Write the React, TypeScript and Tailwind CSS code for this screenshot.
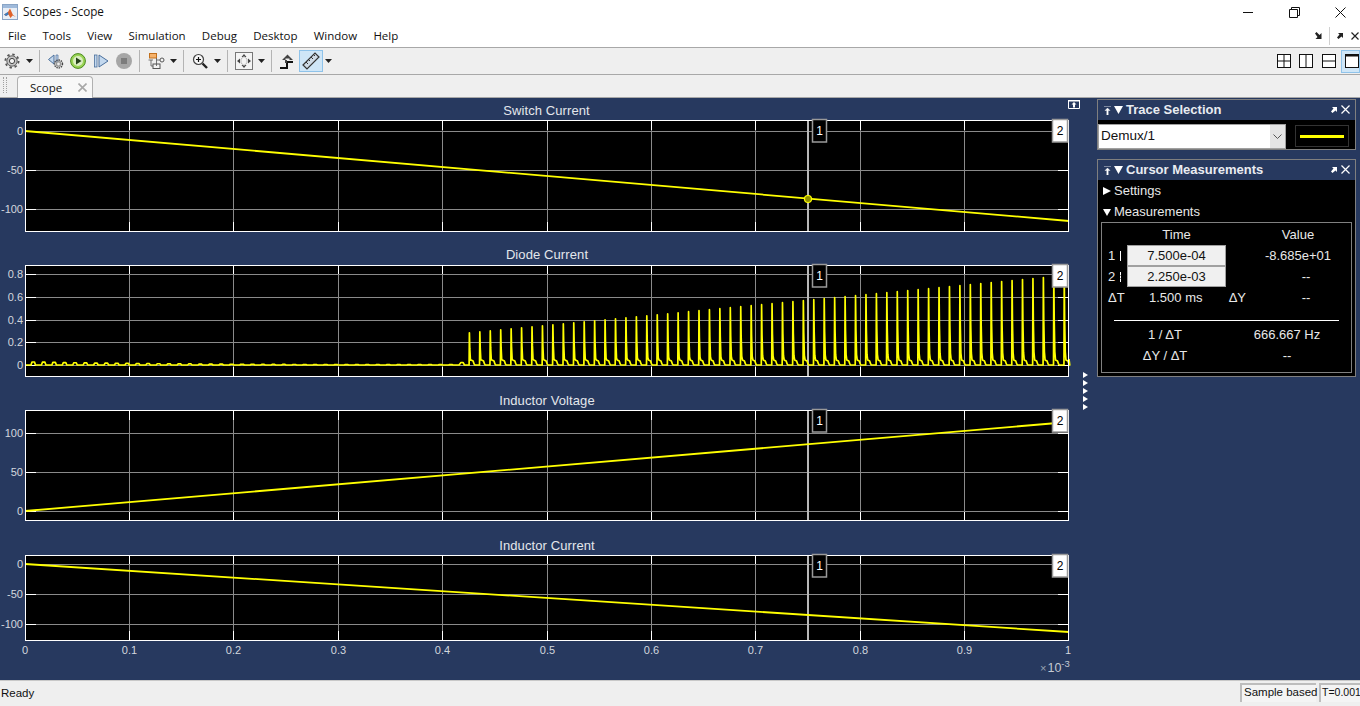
const XS = Array.from({ length: 11 }, (_, i) => Math.round(24.7 + i * 104.375) + 0.5);

function buildDiodePath(y0: number) {
  let d = `M25 ${y0}`;
  // small ripple that dies out on the left side
  for (let k = 0; k < 41; k++) {
    const x = 31 + k * 10.44;
    const a = Math.max(0.35, 3 * Math.exp(-k / 14));
    d += ` L${x} ${y0} L${x + 1} ${y0 - a} L${x + 3.5} ${y0 - a} L${x + 4.5} ${y0} `;
  }
  d += ` L459 ${y0} L461 ${y0 - 2.5} L463 ${y0 - 2.5} L464.5 ${y0}`;
  for (let k = 0; k < 58; k++) {
    const x = 469.7 + k * 10.436;
    if (x > 1068) break;
    const h = 115 * (0.28 + (0.48 * k) / 55);
    d += ` L${x - 0.6} ${y0} L${x - 0.3} ${y0 - h} L${x + 0.1} ${y0 - h * 0.5} L${x + 0.7} ${y0 - h * 0.15} L${x + 1.4} ${y0 - 5}`;
    d += ` L${x + 3.4} ${y0 - 4} L${x + 4.4} ${y0 - 1} L${x + 5.2} ${y0}`;
  }
  return d + ` L1069 ${y0 - 6}`;
}

interface PlotProps {
  title: string;
  height: number;
  ticks: { y: number; label: string }[];
  trace: string;
  traceWidth?: number;
  dot?: [number, number];
  xAxis?: boolean;
  popout?: boolean;
  tightTitle?: boolean;
}

function Plot({ title, height, ticks, trace, traceWidth = 1.8, dot, xAxis, popout, tightTitle }: PlotProps) {
  const extra = xAxis ? 36 : 0;
  return (
    <div className="flex flex-col">
      <div className="flex h-[20px] items-start pl-[25px]">
        <div className={`w-[1044px] text-center text-[13px] leading-[20px] tracking-[0.1px] text-[#e4e7ec] ${tightTitle ? "" : "pt-[1px]"}`}>{title}</div>
        {popout && (
          <svg width="12" height="9" viewBox="0 0 12 9" className="shrink-0">
            <path d="M0.5 0.5H11.5V8.5H0.5Z" fill="none" stroke="#fff" />
            <path d="M0 0H12V1.5H0Z" fill="#fff" />
            <path d="M6 2L8.5 4.6H7V7.5H5V4.6H3.5Z" fill="#fff" />
          </svg>
        )}
      </div>
      <svg width="1080" height={height + extra} viewBox={`0 0 1080 ${height + extra}`} className="block overflow-visible">
        <rect x="25" y="0" width="1044" height={height} fill="#000" />
        {XS.slice(1, 10).map((x) => (
          <g key={x}>
            <line x1={x} x2={x} y1="0" y2={height} stroke="#8a8a8a" />
            <line x1={x} x2={x} y1="0" y2="10" stroke="#fff" />
            <line x1={x} x2={x} y1={height - 10} y2={height} stroke="#fff" />
          </g>
        ))}
        {ticks.map((t) => (
          <g key={t.label}>
            <line x1="25" x2="1069" y1={t.y + 0.5} y2={t.y + 0.5} stroke="#8a8a8a" />
            <line x1="25" x2="36" y1={t.y + 0.5} y2={t.y + 0.5} stroke="#fff" />
            <line x1="1058" x2="1069" y1={t.y + 0.5} y2={t.y + 0.5} stroke="#fff" />
            <text x="23" y={t.y + 4} textAnchor="end" fontSize="11" fill="#d3d7de" fontFamily="'Liberation Sans', sans-serif">
              {t.label}
            </text>
          </g>
        ))}
        <rect x="807" y="0" width="2" height={height} fill="#b8b8b8" />
        <path d={trace} fill="none" stroke="#ffff00" strokeWidth={traceWidth} strokeLinejoin="round" />
        {dot && <circle cx={dot[0]} cy={dot[1]} r="3.5" fill="#8f8f00" stroke="#ffff00" strokeWidth="1.2" />}
        <rect x="25.5" y="0.5" width="1043" height={height - 1} fill="none" stroke="#fff" />
        <rect x="812.5" y="-0.5" width="14" height="22.5" fill="#000" stroke="#9a9a9a" strokeWidth="1.5" />
        <text x="819.5" y="15" textAnchor="middle" fontSize="12" fill="#fff" fontFamily="'Liberation Sans', sans-serif">1</text>
        <rect x="1052.5" y="-0.5" width="15" height="22.5" fill="#fff" stroke="#9a9a9a" strokeWidth="1.5" />
        <text x="1060" y="15" textAnchor="middle" fontSize="12" fill="#000" fontFamily="'Liberation Sans', sans-serif">2</text>
        {xAxis &&
          XS.map((x, i) => (
            <text key={i} x={i === 0 ? 25 : i === 10 ? 1068 : x} y={height + 13} textAnchor="middle" fontSize="11" fill="#d3d7de" fontFamily="'Liberation Sans', sans-serif">
              {i === 0 ? "0" : i === 10 ? "1" : (i / 10).toFixed(1)}
            </text>
          ))}
        {xAxis && (
          <text x="1040" y={height + 31} fontSize="12.5" fill="#c4c9d2" fontFamily="'Liberation Sans', sans-serif">
            <tspan fill="#9aa3b2" fontSize="11">×</tspan>
            <tspan dx="1">10</tspan>
            <tspan dy="-5" fontSize="9.5">-3</tspan>
          </text>
        )}
      </svg>
    </div>
  );
}

function Caret() {
  return (
    <svg width="7" height="4" viewBox="0 0 7 4" className="shrink-0">
      <path d="M0 0H7L3.5 4Z" fill="#222" />
    </svg>
  );
}

function Sep({ cls }: { cls: string }) {
  return <div className={`h-[22px] w-px shrink-0 bg-[#b4b4b4] ${cls}`} />;
}

function GearIcon({ size = 16 }: { size?: number }) {
  return (
    <svg width={size} height={size} viewBox="0 0 16 16" className="shrink-0">
      <circle cx="8" cy="8" r="6.6" fill="none" stroke="#555" strokeWidth="1.8" strokeDasharray="2.4 2.8" />
      <circle cx="8" cy="8" r="5.2" fill="#c4c4c4" stroke="#555" strokeWidth="0.9" />
      <circle cx="8" cy="8" r="2.6" fill="#f4f4f4" stroke="#444" strokeWidth="1" />
    </svg>
  );
}

function LayoutIcon({ kind }: { kind: "four" | "cols" | "rows" | "one" }) {
  return (
    <svg width="14" height="14" viewBox="0 0 14 14" className="shrink-0">
      <rect x="0.5" y="0.5" width="13" height="13" fill="#fff" stroke="#111" />
      {kind === "one" && <rect x="0.5" y="0.5" width="13" height="2" fill="#111" />}
      {(kind === "four" || kind === "cols") && <line x1="7" x2="7" y1="0" y2="14" stroke="#111" />}
      {(kind === "four" || kind === "rows") && <line y1="7" y2="7" x1="0" x2="14" stroke="#111" />}
    </svg>
  );
}

function Toolbar() {
  return (
    <div className="flex h-[26px] items-center bg-[#efefef] pl-[4px]">
      <GearIcon />
      <div className="ml-[6px]"><Caret /></div>
      <Sep cls="ml-[6px]" />
      {/* step back */}
      <svg width="16" height="16" viewBox="0 0 16 16" className="ml-[8px] shrink-0">
        <path d="M6 2L0.5 6.5L6 11V2Z" fill="#c3d8ee" stroke="#4a6f9c" />
        <path d="M8 2H10V9H8Z" fill="#c3d8ee" stroke="#4a6f9c" strokeWidth="0.7" />
        <circle cx="10.5" cy="11" r="4" fill="none" stroke="#444" strokeWidth="1.4" strokeDasharray="1.4 0.9" />
        <circle cx="10.5" cy="11" r="3" fill="#999" />
        <circle cx="10.5" cy="11" r="1.4" fill="#eee" />
      </svg>
      {/* run */}
      <svg width="16" height="16" viewBox="0 0 16 16" className="ml-[6px] shrink-0">
        <circle cx="8" cy="8" r="7.4" fill="#9ad455" stroke="#4a8a1e" />
        <circle cx="8" cy="8" r="5" fill="#dbeec2" />
        <path d="M6 4.5L11.5 8L6 11.5Z" fill="#23401a" />
      </svg>
      {/* step forward */}
      <svg width="16" height="16" viewBox="0 0 16 16" className="ml-[7px] shrink-0">
        <rect x="1.5" y="2" width="2.5" height="12" fill="#c3d8ee" stroke="#4a6f9c" strokeWidth="0.8" />
        <path d="M6 2L15 8L6 14Z" fill="#c3d8ee" stroke="#4a6f9c" />
      </svg>
      {/* stop */}
      <svg width="16" height="16" viewBox="0 0 16 16" className="ml-[7px] shrink-0">
        <circle cx="8" cy="8" r="8" fill="#a6a6a6" />
        <rect x="5" y="5" width="6" height="6" fill="#7c7c7c" />
      </svg>
      <Sep cls="ml-[7px]" />
      {/* library browser */}
      <svg width="18" height="18" viewBox="0 0 18 18" className="ml-[8px] shrink-0">
        <rect x="1.5" y="1.5" width="7" height="4.5" fill="#f6b26b" stroke="#c2701c" />
        <rect x="5" y="12" width="7" height="4.5" fill="#f4f4f4" stroke="#555" />
        <circle cx="14" cy="8" r="2" fill="#f4f4f4" stroke="#555" />
        <path d="M0.5 8H5M12 8H8.5V14M8.5 6V8M3 8V14H5" fill="none" stroke="#555" strokeWidth="0.8" />
      </svg>
      <div className="ml-[4px]"><Caret /></div>
      <Sep cls="ml-[6px]" />
      {/* zoom */}
      <svg width="16" height="16" viewBox="0 0 16 16" className="ml-[8px] shrink-0">
        <circle cx="6.5" cy="6.5" r="5" fill="#f7f7f7" stroke="#444" strokeWidth="1.2" />
        <path d="M4 6.5H9M6.5 4V9" stroke="#111" strokeWidth="1.2" />
        <path d="M10.5 10.5L15 15" stroke="#222" strokeWidth="2.4" />
      </svg>
      <div className="ml-[6px]"><Caret /></div>
      <Sep cls="ml-[6px]" />
      {/* fit to view */}
      <svg width="18" height="18" viewBox="0 0 18 18" className="ml-[7px] shrink-0">
        <rect x="0.5" y="0.5" width="17" height="17" fill="#f4f4f4" stroke="#777" />
        <path d="M9 2L11.5 5H6.5ZM9 16L6.5 13H11.5ZM2 9L5 6.5V11.5ZM16 9L13 11.5V6.5Z" fill="#444" />
        <path d="M6 7L9 4.5L12 7V11L9 13.5L6 11Z" fill="none" stroke="#bbb" />
      </svg>
      <div className="ml-[5px]"><Caret /></div>
      <Sep cls="ml-[6px]" />
      {/* triggers */}
      <svg width="16" height="16" viewBox="0 0 16 16" className="ml-[7px] shrink-0">
        <path d="M1 15H8V9H14" fill="none" stroke="#111" strokeWidth="2" />
        <path d="M3 7L8.5 1.5L14 7H10.5V5.5H6.5V7H8V10H6V7Z" fill="#444" />
      </svg>
      <div className="ml-[4px] flex h-[22px] w-[24px] shrink-0 items-center justify-center border border-[#8fc3ea] bg-[#cfe6f7]">
        <svg width="18" height="18" viewBox="0 0 18 18">
          <path d="M1 13L13 1L17 5L5 17Z" fill="#cfdbe6" stroke="#333" strokeWidth="1.2" />
          <path d="M4 10L6 12M6.5 7.5L8 9M9 5L11 7M11.5 2.5L13 4" stroke="#333" />
        </svg>
      </div>
      <div className="ml-[2px]"><Caret /></div>
      <div className="ml-auto flex items-center">
        <LayoutIcon kind="four" />
        <div className="ml-[8px]"><LayoutIcon kind="cols" /></div>
        <div className="ml-[9px]"><LayoutIcon kind="rows" /></div>
        <div className="ml-[5px] flex h-[23px] w-[19px] items-center justify-center border border-[#8fc3ea] bg-[#cfe6f7] pl-[2px]">
          <LayoutIcon kind="one" />
        </div>
      </div>
    </div>
  );
}

function PanelHeader({ title }: { title: string }) {
  return (
    <div className="flex h-[20px] items-center bg-[#27395f] pl-[6px] pr-[5px]">
      <svg width="7" height="9" viewBox="0 0 7 9" className="shrink-0">
        <path d="M0 0.5H7M3.5 2L6 4.5H4.2V9H2.8V4.5H1Z" fill="#fff" stroke="#fff" strokeWidth="0.4" />
      </svg>
      <svg width="9" height="8" viewBox="0 0 9 8" className="ml-[3px] shrink-0">
        <path d="M0 0H9L4.5 8Z" fill="#fff" />
      </svg>
      <span className="ml-[3px] text-[13px] leading-[20px] font-bold text-[#e9ecf1]">{title}</span>
      <svg width="6" height="6" viewBox="0 0 6 6" className="ml-auto shrink-0">
        <path d="M1 0H6V5L4.5 3.5L1.5 6L0 4.5L2.5 1.5Z" fill="#fff" />
      </svg>
      <svg width="9" height="9" viewBox="0 0 9 9" className="ml-[4px] -mt-[2px] shrink-0">
        <path d="M0.5 0.5L8.5 8.5M8.5 0.5L0.5 8.5" stroke="#fff" strokeWidth="1.2" />
      </svg>
    </div>
  );
}

function Tri({ down }: { down?: boolean }) {
  return (
    <svg width="8" height="8" viewBox="0 0 8 8" className="shrink-0">
      <path d={down ? "M0 1H8L4 8Z" : "M0 0L8 4L0 8Z"} fill="#fff" />
    </svg>
  );
}

function CursorBox() {
  return (
    <div className="mx-[3px] h-[151px] border border-[#808080] pt-[1px] text-[13px] leading-[21px] text-[#e8e8e8]">
      <div className="grid grid-cols-[25px_99px_124px] text-center">
        <div className="h-[21px]" />
        <div>Time</div>
        <div className="pl-[20px]">Value</div>

        <div className="flex items-center pl-[6px] text-left">
          1<span className="ml-[5px] h-[10px] w-px bg-white" />
        </div>
        <div className="h-[21px] border border-[#a0a0a0] bg-[#f0f0f0] leading-[19px] text-[#111]">7.500e-04</div>
        <div className="pl-[20px]">-8.685e+01</div>

        <div className="flex items-center pl-[6px] text-left">
          2<span className="ml-[5px] h-[10px] border-l border-dashed border-white" />
        </div>
        <div className="h-[21px] border border-[#a0a0a0] bg-[#f0f0f0] leading-[19px] text-[#111]">2.250e-03</div>
        <div className="pl-[36px]">--</div>

        <div className="pl-[6px] text-left">ΔT</div>
        <div className="flex justify-between pl-[22px]">
          <span>1.500 ms</span>
          <span className="-mr-[20px]">ΔY</span>
        </div>
        <div className="pl-[36px]">--</div>
      </div>
      <div className="mx-[12px] mt-[12px] h-px bg-white" />
      <div className="grid grid-cols-[124px_124px] pt-[3px] text-center">
        <div className="pl-[2px]">1 / ΔT</div>
        <div className="pr-[2px]">666.667 Hz</div>
        <div className="pl-[2px]">ΔY / ΔT</div>
        <div className="pr-[2px]">--</div>
      </div>
    </div>
  );
}

export default function App() {
  return (
    <div className="flex h-[706px] w-[1360px] flex-col overflow-hidden bg-white font-['Liberation_Sans',sans-serif]">
      {/* title bar */}
      <div className="flex h-[24px] items-center pl-[2px]">
        <svg width="16" height="16" viewBox="0 0 16 16" className="shrink-0">
          <rect x="0.5" y="0.5" width="15" height="15" fill="#e8eef6" stroke="#8aa5c6" />
          <rect x="1" y="1" width="14" height="3" fill="#9fbadb" />
          <path d="M2 10.5L6 8L8 4.5L11 11L14 13L10.5 11.5L8.5 14L6.5 10.5L4 12Z" fill="#e0622a" />
          <path d="M2 10.5L6 8L6.5 10.5L4 12Z" fill="#3a7ec0" />
        </svg>
        <span className="ml-[5px] font-['Open_Sans',sans-serif] text-[11.7px] text-[#111]">Scopes - Scope</span>
        <div className="ml-auto flex items-center pr-[14px]">
          <div className="h-px w-[10px] bg-[#111]" />
          <svg width="11" height="11" viewBox="0 0 11 11" className="ml-[36px]">
            <path d="M0.5 2.5H8.5V10.5H0.5ZM2.5 2.5V0.5H10.5V8.5H8.5" fill="none" stroke="#111" />
          </svg>
          <svg width="11" height="11" viewBox="0 0 11 11" className="ml-[35px]">
            <path d="M0.5 0.5L10.5 10.5M10.5 0.5L0.5 10.5" stroke="#111" />
          </svg>
        </div>
      </div>

      {/* menu bar */}
      <div className="flex h-[24px] items-center border-b border-[#a8a8a8] pl-[8px] font-['Open_Sans',sans-serif] text-[11.5px] text-[#111]">
        <div className="flex gap-[16.2px]">
          {["File", "Tools", "View", "Simulation", "Debug", "Desktop", "Window", "Help"].map((m) => (
            <span key={m}>{m}</span>
          ))}
        </div>
        <div className="ml-auto flex items-center pr-[1px]">
          <svg width="7" height="7" viewBox="0 0 7 7">
            <path d="M0 1.5L1.5 0L4.5 3L6.5 1V7H0.5L2.5 5Z" fill="#222" />
          </svg>
          <div className="ml-[7px] h-[18px] w-px bg-[#d0d0d0]" />
          <svg width="6" height="6" viewBox="0 0 6 6" className="ml-[7px]">
            <path d="M1 0H6V5L4.5 3.5L1.5 6L0 4.5L2.5 1.5Z" fill="#222" />
          </svg>
          <svg width="8" height="8" viewBox="0 0 8 8" className="ml-[8px]">
            <path d="M0.5 0.5L7.5 7.5M7.5 0.5L0.5 7.5" stroke="#222" strokeWidth="1.2" />
          </svg>
        </div>
      </div>

      <Toolbar />

      {/* tab strip */}
      <div className="flex h-[24px] items-end border-y border-[#a8a8a8] bg-[#efefef] pl-[3px]">
        <div className="mb-[2px] h-[16px] w-[4px] self-center border-x border-dotted border-[#a0a0a0]" />
        <div className="ml-[10px] -mb-px flex h-[22px] w-[76px] items-center rounded-t-[4px] border border-b-0 border-[#b0b0b0] bg-[#f8f8f8] pl-[12px] font-['Open_Sans',sans-serif] text-[11.5px] text-[#111]">
          Scope
          <svg width="9" height="9" viewBox="0 0 9 9" className="ml-[16px]">
            <path d="M0.5 0.5L8.5 8.5M8.5 0.5L0.5 8.5" stroke="#a8a8a8" strokeWidth="1.6" />
          </svg>
        </div>
      </div>

      {/* main area */}
      <div className="flex min-h-0 flex-1 bg-[#27395f]">
        <div className="flex w-[1080px] shrink-0 flex-col gap-[13px] pt-[2px]">
          <Plot
            title="Switch Current"
            height={112}
            popout
            ticks={[
              { y: 11, label: "0" },
              { y: 50, label: "-50" },
              { y: 89, label: "-100" },
            ]}
            trace="M25 11L1069 101"
            dot={[808, 79]}
          />
          <Plot
            title="Diode Current"
            height={112}
            tightTitle
            traceWidth={1.7}
            ticks={[
              { y: 9, label: "0.8" },
              { y: 32, label: "0.6" },
              { y: 55, label: "0.4" },
              { y: 77, label: "0.2" },
              { y: 100, label: "0" },
            ]}
            trace={buildDiodePath(100)}
          />
          <Plot
            title="Inductor Voltage"
            height={111}
            ticks={[
              { y: 23, label: "100" },
              { y: 62, label: "50" },
              { y: 101, label: "0" },
            ]}
            trace="M25 101L1069 12"
          />
          <div className="mt-[1px]">
            <Plot
              title="Inductor Current"
              height={86}
              xAxis
              ticks={[
                { y: 9, label: "0" },
                { y: 39, label: "-50" },
                { y: 69, label: "-100" },
              ]}
              trace="M25 9L1069 77"
            />
          </div>
        </div>

        {/* sash */}
        <div className="flex w-[17px] shrink-0 flex-col items-center justify-center gap-[2px] pr-[7px] pt-[4px]">
          {[0, 1, 2, 3, 4].map((i) => (
            <svg key={i} width="5" height="6" viewBox="0 0 5 6">
              <path d="M0 0L5 3L0 6Z" fill="#fff" />
            </svg>
          ))}
        </div>

        {/* right panels */}
        <div className="flex w-[259px] shrink-0 flex-col gap-[9px] pt-[1px] text-[13px]">
          <div className="border border-[#7f7f7f] bg-black">
            <PanelHeader title="Trace Selection" />
            <div className="flex h-[29px] items-start">
              <div className="mt-[4px] flex h-[25px] w-[188px] items-center justify-between border border-[#a0a0a0] bg-white pl-[2px] text-[13.5px] text-[#111]">
                Demux/1
                <div className="flex h-full w-[15px] items-center justify-center bg-[#e4e4e4]">
                  <svg width="9" height="5" viewBox="0 0 9 5">
                    <path d="M0.5 0.5L4.5 4.5L8.5 0.5" fill="none" stroke="#555" />
                  </svg>
                </div>
              </div>
              <div className="ml-[9px] mt-[5px] flex h-[22px] w-[54px] items-center justify-center border border-[#333]">
                <div className="h-[3px] w-[44px] bg-[#ffff00]" />
              </div>
            </div>
          </div>

          <div className="h-[218px] border border-[#7f7f7f] bg-black">
            <PanelHeader title="Cursor Measurements" />
            <div className="flex h-[21px] items-center gap-[3px] pl-[5px] text-[#e8e8e8]">
              <Tri /> Settings
            </div>
            <div className="flex h-[21px] items-center gap-[3px] pl-[5px] text-[#e8e8e8]">
              <Tri down /> Measurements
            </div>
            <CursorBox />
          </div>
        </div>
      </div>

      {/* status bar */}
      <div className="flex h-[26px] shrink-0 items-center border-t border-[#c8c8c8] bg-[#efefef] pl-[1px] text-[11.5px] whitespace-nowrap text-[#111]">
        <span>Ready</span>
        <div className="mb-[3px] ml-auto flex h-[19px] items-stretch gap-[3px]">
          <div className="flex w-[76px] items-center border-t-2 border-l-2 border-[#bdbdbd] bg-[#f4f4f4] pl-[2px]">Sample based</div>
          <div className="flex w-[41px] items-center border-t-2 border-l-2 border-[#bdbdbd] bg-[#f4f4f4] pl-[1px] text-[10.5px]">T=0.001</div>
        </div>
      </div>
    </div>
  );
}
